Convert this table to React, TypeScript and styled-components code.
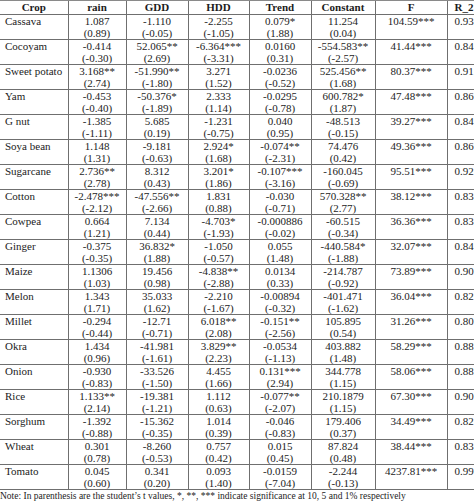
import React from "react";
import styled, { createGlobalStyle } from "styled-components";

const GlobalStyle = createGlobalStyle`
  html, body {
    margin: 0;
    padding: 0;
    background: #ffffff;
  }
  body {
    font-family: "Liberation Serif", "Times New Roman", serif;
    color: #1c1c1c;
  }
`;

const Page = styled.div`
  width: 474px;
  height: 502px;
  overflow: hidden;
  background: #ffffff;
`;

const Table = styled.table`
  border-collapse: collapse;
  table-layout: fixed;
  width: 474px;
  font-size: 11px;
`;

const HeadCell = styled.th<{ $last?: boolean }>`
  height: 13px;
  line-height: 13px;
  padding: ${(p) => (p.$last ? "0 0 0 7px" : "0")};
  font-weight: bold;
  text-align: ${(p) => (p.$last ? "left" : "center")};
  vertical-align: middle;
  white-space: nowrap;
  overflow: hidden;
  border-top: 1px solid #8a8a8a;
  border-bottom: 1px solid #6f6f6f;
  border-left: 1px solid #6f6f6f;
  &:first-child {
    border-left: none;
  }
`;

const CropCell = styled.td`
  height: 24px;
  line-height: 12px;
  padding: 0 0 0 5px;
  text-align: left;
  vertical-align: top;
  border-bottom: 1px solid #6f6f6f;
  white-space: nowrap;
`;

const ValueCell = styled.td<{ $last?: boolean }>`
  height: 24px;
  line-height: 12px;
  padding: ${(p) => (p.$last ? "0 0 0 7px" : "0")};
  text-align: ${(p) => (p.$last ? "left" : "center")};
  vertical-align: top;
  border-bottom: 1px solid #6f6f6f;
  border-left: 1px solid #6f6f6f;
  white-space: nowrap;
  overflow: hidden;
`;

const Line = styled.div`
  height: 12px;
`;

const Note = styled.div`
  font-size: 9.5px;
  line-height: 12px;
  padding-left: 0;
  white-space: nowrap;
  color: #1c1c1c;
`;

type Pair = [string, string];
type Row = {
  crop: string;
  vals: Pair[];
  f: string;
  r2: string;
};

const rows: Row[] = [
  { crop: "Cassava", vals: [["1.087", "(0.89)"], ["-1.110", "(-0.05)"], ["-2.255", "(-1.05)"], ["0.079*", "(1.88)"], ["11.254", "(0.04)"]], f: "104.59***", r2: "0.93" },
  { crop: "Cocoyam", vals: [["-0.414", "(-0.30)"], ["52.065**", "(2.69)"], ["-6.364***", "(-3.31)"], ["0.0160", "(0.31)"], ["-554.583**", "(-2.57)"]], f: "41.44***", r2: "0.84" },
  { crop: "Sweet potato", vals: [["3.168**", "(2.74)"], ["-51.990**", "(-1.80)"], ["3.271", "(1.52)"], ["-0.0236", "(-0.52)"], ["525.456**", "(1.68)"]], f: "80.37***", r2: "0.91" },
  { crop: "Yam", vals: [["-0.453", "(-0.40)"], ["-50.376*", "(-1.89)"], ["2.333", "(1.14)"], ["-0.0295", "(-0.78)"], ["600.782*", "(1.87)"]], f: "47.48***", r2: "0.86" },
  { crop: "G nut", vals: [["-1.385", "(-1.11)"], ["5.685", "(0.19)"], ["-1.231", "(-0.75)"], ["0.040", "(0.95)"], ["-48.513", "(-0.15)"]], f: "39.27***", r2: "0.84" },
  { crop: "Soya bean", vals: [["1.148", "(1.31)"], ["-9.181", "(-0.63)"], ["2.924*", "(1.68)"], ["-0.074**", "(-2.31)"], ["74.476", "(0.42)"]], f: "49.36***", r2: "0.86" },
  { crop: "Sugarcane", vals: [["2.736**", "(2.78)"], ["8.312", "(0.43)"], ["3.201*", "(1.86)"], ["-0.107***", "(-3.16)"], ["-160.045", "(-0.69)"]], f: "95.51***", r2: "0.92" },
  { crop: "Cotton", vals: [["-2.478***", "(-2.12)"], ["-47.556**", "(-2.66)"], ["1.831", "(0.88)"], ["-0.030", "(-0.71)"], ["570.328**", "(2.77)"]], f: "38.12***", r2: "0.83" },
  { crop: "Cowpea", vals: [["0.664", "(1.21)"], ["7.134", "(0.44)"], ["-4.703*", "(-1.93)"], ["-0.000886", "(-0.02)"], ["-60.515", "(-0.34)"]], f: "36.36***", r2: "0.83" },
  { crop: "Ginger", vals: [["-0.375", "(-0.35)"], ["36.832*", "(1.88)"], ["-1.050", "(-0.57)"], ["0.055", "(1.48)"], ["-440.584*", "(-1.88)"]], f: "32.07***", r2: "0.84" },
  { crop: "Maize", vals: [["1.1306", "(1.03)"], ["19.456", "(0.98)"], ["-4.838**", "(-2.88)"], ["0.0134", "(0.33)"], ["-214.787", "(-0.92)"]], f: "73.89***", r2: "0.90" },
  { crop: "Melon", vals: [["1.343", "(1.71)"], ["35.033", "(1.62)"], ["-2.210", "(-1.67)"], ["-0.00894", "(-0.32)"], ["-401.471", "(-1.62)"]], f: "36.04***", r2: "0.82" },
  { crop: "Millet", vals: [["-0.294", "(-0.44)"], ["-12.71", "(-0.71)"], ["6.018**", "(2.08)"], ["-0.151**", "(-2.56)"], ["105.895", "(0.54)"]], f: "31.26***", r2: "0.80" },
  { crop: "Okra", vals: [["1.434", "(0.96)"], ["-41.981", "(-1.61)"], ["3.829**", "(2.23)"], ["-0.0534", "(-1.13)"], ["403.882", "(1.48)"]], f: "58.29***", r2: "0.88" },
  { crop: "Onion", vals: [["-0.930", "(-0.83)"], ["-33.526", "(-1.50)"], ["4.455", "(1.66)"], ["0.131***", "(2.94)"], ["344.778", "(1.15)"]], f: "58.06***", r2: "0.88" },
  { crop: "Rice", vals: [["1.133**", "(2.14)"], ["-19.381", "(-1.21)"], ["1.112", "(0.63)"], ["-0.077**", "(-2.07)"], ["210.1879", "(1.15)"]], f: "67.30***", r2: "0.90" },
  { crop: "Sorghum", vals: [["-1.392", "(-0.88)"], ["-15.362", "(-0.35)"], ["1.014", "(0.39)"], ["-0.046", "(-0.83)"], ["179.406", "(0.37)"]], f: "34.49***", r2: "0.82" },
  { crop: "Wheat", vals: [["0.301", "(0.78)"], ["-8.260", "(-0.53)"], ["0.757", "(0.42)"], ["0.015", "(0.45)"], ["87.824", "(0.48)"]], f: "38.44***", r2: "0.83" },
  { crop: "Tomato", vals: [["0.045", "(0.60)"], ["0.341", "(0.20)"], ["0.093", "(1.40)"], ["-0.0159", "(-7.04)"], ["-2.244", "(-0.13)"]], f: "4237.81***", r2: "0.99" },
];

const headers = ["Crop", "rain", "GDD", "HDD", "Trend", "Constant", "F", "R_2"];
const widths = [68, 58, 62, 61, 62, 64, 72, 27];

export default function App() {
  return (
    <>
      <GlobalStyle />
      <Page>
        <Table>
          <colgroup>
            {widths.map((w, i) => (
              <col key={i} style={{ width: w }} />
            ))}
          </colgroup>
          <thead>
            <tr>
              {headers.map((h, i) => (
                <HeadCell key={h} $last={i === headers.length - 1}>
                  {h}
                </HeadCell>
              ))}
            </tr>
          </thead>
          <tbody>
            {rows.map((r) => (
              <tr key={r.crop}>
                <CropCell>{r.crop}</CropCell>
                {r.vals.map(([a, b], i) => (
                  <ValueCell key={i}>
                    <Line>{a}</Line>
                    <Line>{b}</Line>
                  </ValueCell>
                ))}
                <ValueCell>
                  <Line>{r.f}</Line>
                </ValueCell>
                <ValueCell $last>
                  <Line>{r.r2}</Line>
                </ValueCell>
              </tr>
            ))}
          </tbody>
        </Table>
        <Note>
          Note: In parenthesis are the student’s t values, *, **, *** indicate significance at 10, 5 and 1% respectively
        </Note>
      </Page>
    </>
  );
}
